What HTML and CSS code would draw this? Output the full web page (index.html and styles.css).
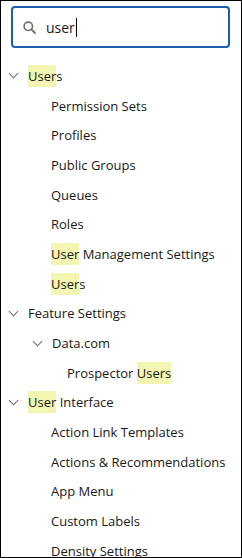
FILE: index.html
```html
<!DOCTYPE html>
<html lang="en">
<head>
    <meta charset="UTF-8">
    <meta name="viewport" content="width=device-width, initial-scale=1.0">
    <title>Setup Tree</title>
    <link rel="stylesheet" href="styles.css">
</head>
<body>
    <div class="panel">
        <div class="search">
            <svg class="search-icon" width="13" height="13" viewBox="0 0 13 13">
                <circle cx="5.3" cy="5.3" r="4.2" fill="none" stroke="#706e6b" stroke-width="1.6"/>
                <line x1="8.4" y1="8.4" x2="12" y2="12" stroke="#706e6b" stroke-width="1.8" stroke-linecap="round"/>
            </svg>
            <span class="query">user</span><span class="caret"></span>
        </div>

        <ul class="tree">
            <li class="row lvl1"><span class="chev"></span><span><mark>User</mark>s</span></li>
            <li class="row lvl2">Permission Sets</li>
            <li class="row lvl2">Profiles</li>
            <li class="row lvl2">Public Groups</li>
            <li class="row lvl2">Queues</li>
            <li class="row lvl2">Roles</li>
            <li class="row lvl2"><span><mark>User</mark> Management Settings</span></li>
            <li class="row lvl2"><span><mark>User</mark>s</span></li>
            <li class="row lvl1"><span class="chev"></span><span>Feature Settings</span></li>
            <li class="row lvl2 has-chev"><span class="chev"></span><span>Data.com</span></li>
            <li class="row lvl3"><span>Prospector <mark>Users</mark></span></li>
            <li class="row lvl1"><span class="chev"></span><span><mark>User</mark> Interface</span></li>
            <li class="row lvl2">Action Link Templates</li>
            <li class="row lvl2">Actions &amp; Recommendations</li>
            <li class="row lvl2">App Menu</li>
            <li class="row lvl2">Custom Labels</li>
            <li class="row lvl2">Density Settings</li>
        </ul>
    </div>
</body>
</html>
```

FILE: styles.css
```css
body {
    margin: 0;
    font-family: "Open Sans", Arial, sans-serif;
    color: #181818;
    background: #ffffff;
}

.panel {
    box-sizing: border-box;
    width: 242px;
    height: 558px;
    border: 1px solid #000000;
    overflow: hidden;
}

/* campo de busca */
.search {
    display: flex;
    align-items: center;
    height: 42px;
    box-sizing: border-box;
    margin: 5px 11px 0 10px;
    padding-left: 10px;
    border: 2px solid #1b5fae;
    border-radius: 4px;
}

.search-icon {
    flex: none;
}

.query {
    margin-left: 10px;
    font-size: 14px;
}

.caret {
    display: inline-block;
    width: 1px;
    height: 19px;
    margin-left: 1px;
    background: #000000;
}

/* arvore */
.tree {
    list-style: none;
    margin: 13px 0 0;
    padding: 0;
}

.row {
    display: flex;
    align-items: center;
    height: 29.7px;
    font-size: 13px;
    white-space: nowrap;
}

.lvl1 {
    padding-left: 6px;
}

.lvl2 {
    padding-left: 50px;
}

.lvl2.has-chev {
    padding-left: 30px;
}

.lvl3 {
    padding-left: 66px;
}

.chev {
    flex: none;
    width: 6px;
    height: 6px;
    margin: -4px 11px 0 3px;
    border-right: 1px solid #706e6b;
    border-bottom: 1px solid #706e6b;
    transform: rotate(45deg);
}

mark {
    background: #f3f6b2;
    color: inherit;
    padding: 2px 0;
}
```
